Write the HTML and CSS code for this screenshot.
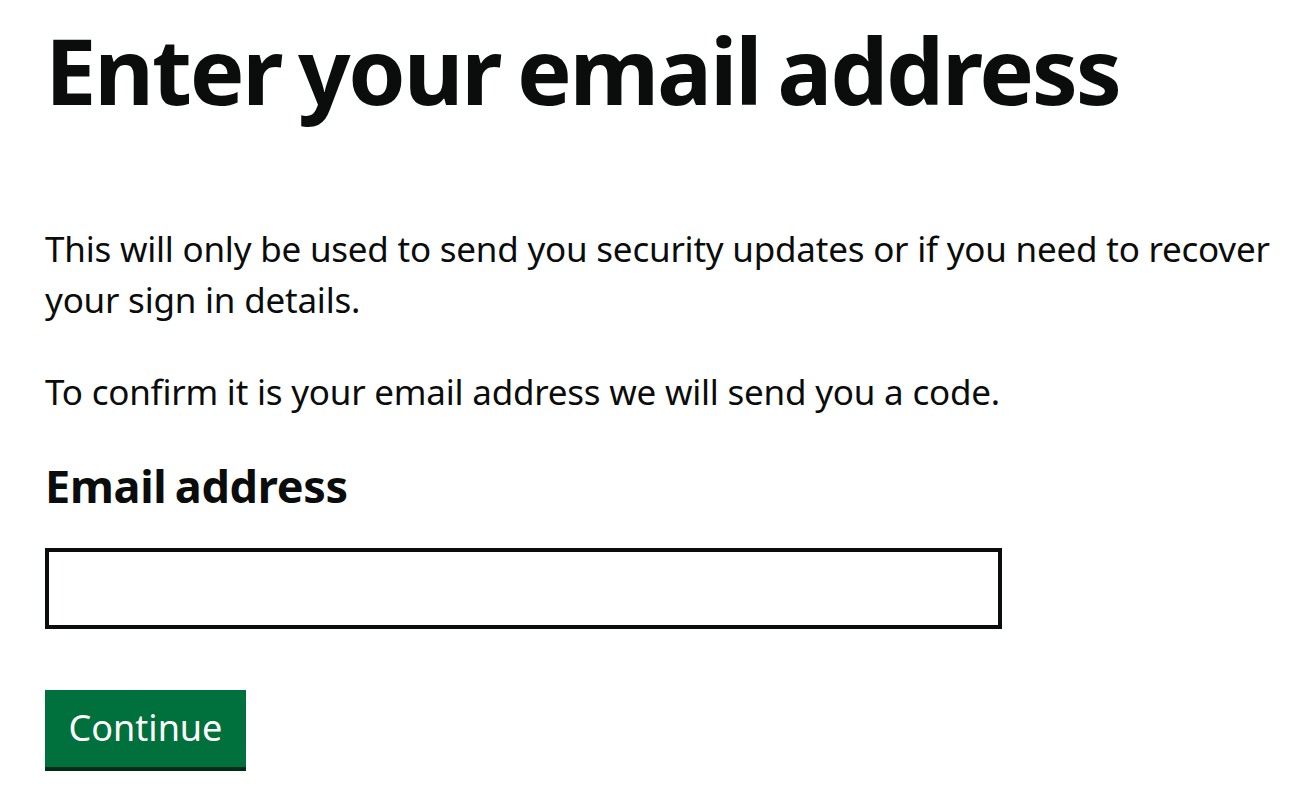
FILE: index.html
```html
<!DOCTYPE html>
<html lang="en">
<head>
<meta charset="utf-8">
<title>Enter your email address</title>
<link rel="stylesheet" href="styles.css">
</head>
<body>
<main class="page">
  <h1 class="heading-xl">Enter your email address</h1>
  <p class="body first">This will only be used to send you security updates or if you need to recover your sign in details.</p>
  <p class="body second">To confirm it is your email address we will send you a code.</p>
  <form class="form">
    <label class="label" for="email">Email address</label>
    <input class="input" id="email" type="email" name="email" autocomplete="email" spellcheck="false">
    <button class="button" type="submit">Continue</button>
  </form>
</main>
</body>
</html>
```
FILE: styles.css
```css
html, body {
  margin: 0;
  padding: 0;
  background: #ffffff;
}
body {
  font-family: "Noto Sans", "Open Sans", sans-serif;
  color: #0b0c0c;
}
.page {
  padding: 20px 20px 0 45px;
}
.heading-xl {
  margin: 0;
  font-size: 92px;
  line-height: 100px;
  font-weight: 700;
  letter-spacing: -2.2px;
  word-spacing: -5px;
}
.body {
  margin: 0;
  font-size: 35px;
  line-height: 51px;
  font-weight: 400;
  letter-spacing: -0.22px;
}
.first { margin-top: 103px; }
.second { margin-top: 41px; }
.form {
  display: flex;
  flex-direction: column;
  align-items: flex-start;
  margin-top: 39px;
}
.label {
  font-size: 45px;
  line-height: 60px;
  font-weight: 700;
  letter-spacing: -0.3px;
  word-spacing: -3px;
}
.input {
  box-sizing: border-box;
  margin-top: 32px;
  width: 957px;
  height: 81px;
  border: 4px solid #0b0c0c;
  border-radius: 0;
  padding: 10px;
  font: inherit;
  font-size: 36px;
  background: #fff;
}
.button {
  margin-top: 61px;
  box-sizing: border-box;
  height: 81px;
  width: 201px;
  border: 0;
  border-bottom: 4px solid #002d18;
  border-radius: 0;
  background: #00703c;
  color: #fff;
  font-family: inherit;
  font-size: 36px;
  line-height: 1;
  padding: 0 0 2px;
  cursor: pointer;
}
```
